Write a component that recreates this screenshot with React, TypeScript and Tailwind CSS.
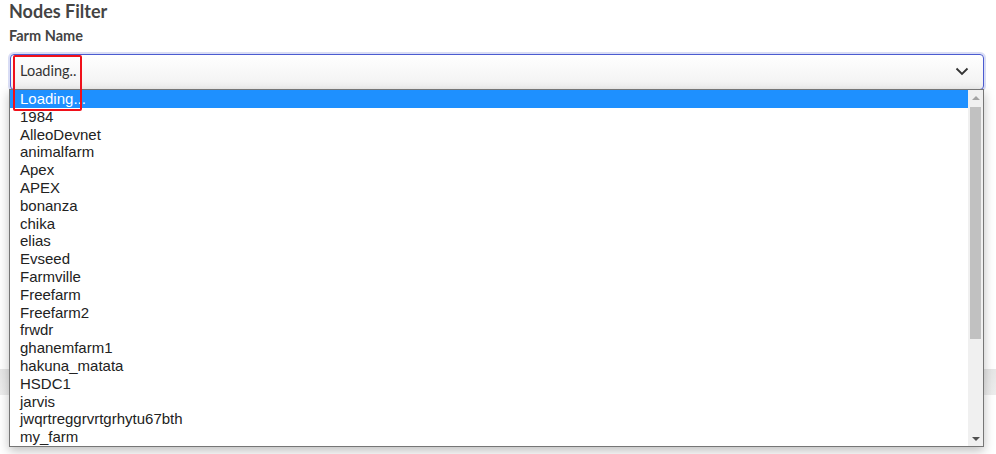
import React from "react";

const farms = [
  "Loading...",
  "1984",
  "AlleoDevnet",
  "animalfarm",
  "Apex",
  "APEX",
  "bonanza",
  "chika",
  "elias",
  "Evseed",
  "Farmville",
  "Freefarm",
  "Freefarm2",
  "frwdr",
  "ghanemfarm1",
  "hakuna_matata",
  "HSDC1",
  "jarvis",
  "jwqrtreggrvrtgrhytu67bth",
  "my_farm",
];

const NodesFilter = () => {
  return (
    <div className="relative w-[996px] h-[454px] overflow-hidden bg-white font-['Lato',sans-serif] text-[#444]">
      <div className="px-[9px]">
        <h2 className="text-[18px] font-bold leading-[22px]">Nodes Filter</h2>
        <p className="text-[14.5px] font-bold leading-[20px] mt-[4px]">Farm Name</p>
        <div className="relative mt-[8px] ml-[1px] w-[974px] h-[36px] rounded-[4px] border border-[#4b5bd0] bg-gradient-to-b from-white to-[#f1f1f1] shadow-[0_0_0_2px_#d9ddf5] flex items-center justify-between pl-[9px] pr-[14px]">
          <span className="text-[14.5px] text-[#333] pb-[3px]">Loading..</span>
          <svg width="14" height="9" viewBox="0 0 14 9" fill="none" className="mb-[2px]">
            <path d="M1.5 1.5 L7 7 L12.5 1.5" stroke="#333" strokeWidth="1.8" />
          </svg>
        </div>
      </div>

      <div className="mt-[279px] h-[26px] bg-gradient-to-b from-[#e6e6e6] to-[#ededed]" />

      {/* open dropdown list */}
      <div className="absolute left-[9px] top-[89px] w-[975px] h-[358px] border border-[#767676] bg-white shadow-[0_4px_10px_rgba(0,0,0,0.25)] flex font-['Liberation_Sans',sans-serif]">
        <ul className="flex-1 overflow-hidden">
          {farms.map((f, i) => (
            <li
              key={f}
              className={`h-[17.8px] leading-[17.5px] pl-[10px] text-[15px] ${
                i === 0 ? "bg-[#1e90ff] text-white" : "text-[#222]"
              }`}
            >
              {f}
            </li>
          ))}
        </ul>
        <div className="w-[15px] bg-[#f0f0f0] flex flex-col items-center">
          <div className="h-[15px] flex items-center justify-center">
            <div className="w-0 h-0 border-l-[4px] border-r-[4px] border-b-[4px] border-l-transparent border-r-transparent border-b-[#a3a3a3]" />
          </div>
          <div className="w-[11px] h-[232px] bg-[#c1c1c1] mt-[2px]" />
          <div className="flex-1" />
          <div className="h-[15px] flex items-center justify-center">
            <div className="w-0 h-0 border-l-[4px] border-r-[4px] border-t-[4px] border-l-transparent border-r-transparent border-t-[#505050]" />
          </div>
        </div>
      </div>

      {/* highlight marker */}
      <div className="absolute left-[13px] top-[55px] w-[69px] h-[56px] border-[2.5px] border-[#f0101a] rounded-[2px]" />
    </div>
  );
};

export default function App() {
  return <NodesFilter />;
}
